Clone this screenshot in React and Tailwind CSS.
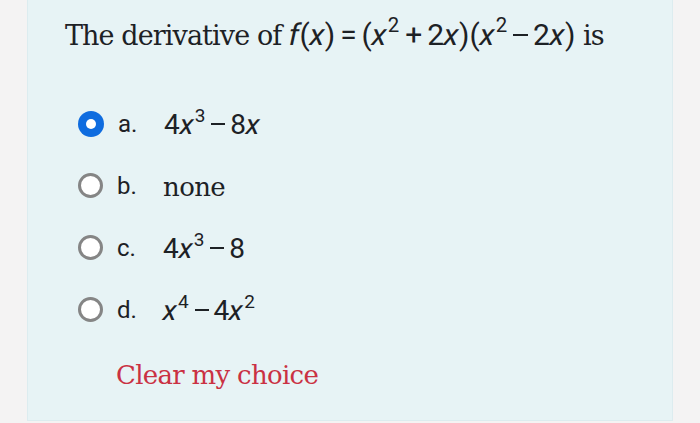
function Sup({ children }) {
  return (
    <span className="text-[0.68em] align-[0.62em] leading-none mx-[1px] font-['Roboto','Liberation_Sans',sans-serif]">
      {children}
    </span>
  );
}
function X() {
  return <span className="inline-block -skew-x-12">x</span>;
}
function Minus() {
  return <span className="inline-block w-[0.5em] h-[2px] bg-current align-[0.3em] mx-[5px]" />;
}
function Op({ c }) {
  return <span className="mx-[5px]">{c}</span>;
}

const sans = "font-['Roboto','Liberation_Sans',sans-serif]";
const serif = "font-['DejaVu_Serif','Liberation_Serif',serif]";

const options = [
  { l: 'a.', sel: true, math: <span className={sans}>4<X /><Sup>3</Sup><Minus />8<X /></span> },
  { l: 'b.', math: <span className={`${serif} text-[26px] tracking-[-0.6px]`}>none</span> },
  { l: 'c.', math: <span className={sans}>4<X /><Sup>3</Sup><Minus />8</span> },
  { l: 'd.', math: <span className={sans}><X /><Sup>4</Sup><Minus />4<X /><Sup>2</Sup></span> },
];

export default function App() {
  return (
    <div className="w-[700px] h-[423px] bg-[#f4f3f3] overflow-hidden flex">
      <div className="ml-[27px] w-[646px] h-[421px] bg-[#e7f3f5] border-l border-r border-b border-[#dcecef] pl-[37px] pt-[15px] text-[#1d2125] flex flex-col">
        <div className={`text-[27px] leading-[36px] tracking-[-0.9px] whitespace-nowrap ${serif}`}>
          The derivative of{' '}
          <span className={`text-[30px] tracking-normal ${sans}`}>
            <span className="inline-block -skew-x-12">f</span>(<X />)<Op c="=" />(<X /><Sup>2</Sup><Op c="+" />2<X />)(<X /><Sup>2</Sup><Minus />2<X />)
          </span>{' '}is
        </div>
        <div className="mt-[39px] flex flex-col pl-[13px]">
          {options.map((o, i) => (
            <div key={i} className="h-[62px] flex items-center gap-[14px]">
              {o.sel ? (
                <div className="w-[26px] h-[26px] rounded-full bg-[#0f6cdf] flex items-center justify-center">
                  <div className="w-[10px] h-[10px] rounded-full bg-white" />
                </div>
              ) : (
                <div className="w-[25px] h-[25px] rounded-full border-[3px] border-[#858585] bg-white" />
              )}
              <span className={`w-[32px] text-[24px] ${sans}`}>{o.l}</span>
              <span className="text-[28px]">{o.math}</span>
            </div>
          ))}
        </div>
        <div className={`mt-[15px] pl-[51px] text-[26px] tracking-[-0.7px] text-[#ca3143] ${serif}`}>
          Clear my choice
        </div>
      </div>
    </div>
  );
}
